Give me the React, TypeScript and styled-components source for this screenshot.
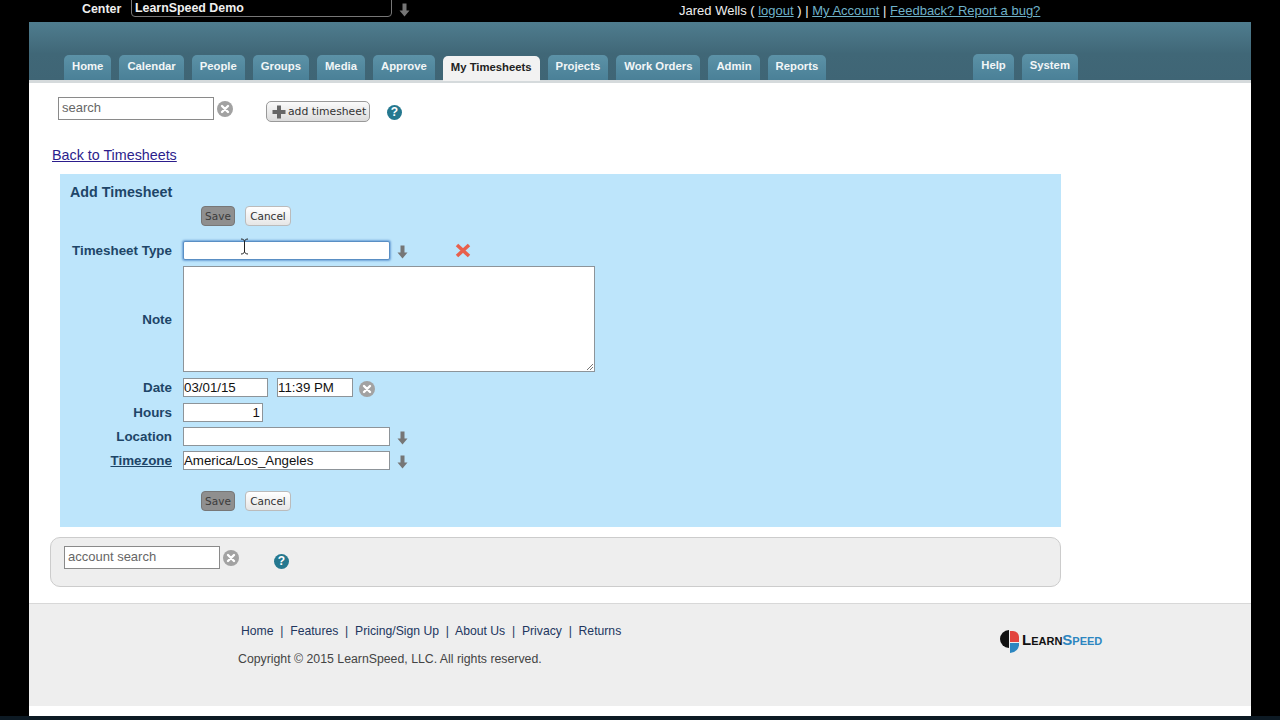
import React from 'react';
import styled, { createGlobalStyle } from 'styled-components';

const Global = createGlobalStyle`
  html, body {
    margin: 0;
    height: 720px;
    overflow: hidden;
    background: #000;
    font-family: "Liberation Sans", Arial, sans-serif;
  }
  * { box-sizing: border-box; }
`;

const TopBar = styled.div`
  height: 22px;
  overflow: hidden;
  background: #000;
  color: #eee;
  font-size: 12.4px;
  display: flex;
  align-items: flex-end;
  padding-bottom: 5px;
`;

const CenterLabel = styled.span`
  margin-left: 82px;
  width: 49px;
  font-weight: bold;
  line-height: 16px;
`;

const CenterSelect = styled.div`
  width: 261px;
  height: 24px;
  flex: none;
  border: 1px solid #777;
  border-radius: 4px;
  padding: 6px 3px 0;
  font-weight: bold;
  line-height: 16px;
  color: #f0f0f0;
`;

const UserLinks = styled.div`
  margin: 0 0 -2px 269px;
  font-size: 13px;
  line-height: 16px;
  white-space: pre;
  a { color: #6fb2c9; text-decoration: underline; }
`;

const Page = styled.div`
  margin-left: 29px;
  width: 1222px;
  height: 698px;
  background: #fff;
  display: flex;
  flex-direction: column;
`;

const Header = styled.div`
  height: 61px;
  flex: none;
  background: linear-gradient(#4f7d8f, #406777 55%, #3f6575);
  border-bottom: 3px solid #d5dadc;
  padding-left: 35px;
  display: flex;
  align-items: flex-end;
  gap: 8px;
`;

const Tab = styled.div<{ $active?: boolean; $tall?: boolean }>`
  height: ${p => (p.$tall ? 26 : 25)}px;
  padding: 5px 8px 0;
  border-radius: 5px 5px 0 0;
  font-size: 11.3px;
  font-weight: bold;
  line-height: 13px;
  color: ${p => (p.$active ? '#222' : '#f2f6f7')};
  background: ${p => (p.$active ? '#f2f2f2' : 'linear-gradient(#5c92a7, #4a8097)')};
  margin-bottom: ${p => (p.$active ? -1 : 0)}px;
`;

const TabGap = styled.div`
  width: 131px;
`;

const Content = styled.div`
  flex: 1;
  padding-top: 14px;
`;

const SearchRow = styled.div`
  display: flex;
  align-items: flex-start;
  height: 49px;
  margin-left: 29px;
`;

const SearchInput = styled.div`
  width: 156px;
  height: 23px;
  border: 1px solid #8a8a8a;
  background: #fff;
  color: #666;
  font-size: 13px;
  line-height: 20px;
  padding-left: 3px;
`;

const ClearIcon = styled.span<{ $x: number; $y: number }>`
  display: inline-flex;
  margin: ${p => p.$y}px 0 0 ${p => p.$x}px;
`;

const AddButton = styled.div`
  margin: 4px 0 0 33px;
  width: 104px;
  height: 21px;
  border: 1px solid #999;
  border-radius: 5px;
  background: linear-gradient(#fafafa, #dcdcdc);
  display: flex;
  align-items: center;
  padding-left: 5px;
  gap: 2px;
  font-family: "DejaVu Sans", sans-serif;
  font-size: 10.8px;
  color: #333;
  white-space: nowrap;
`;

const Help = styled.span<{ $x: number; $y: number }>`
  width: 15px;
  height: 15px;
  margin: ${p => p.$y}px 0 0 ${p => p.$x}px;
  border-radius: 50%;
  background: #25788f;
  color: #fff;
  font-size: 12px;
  font-weight: bold;
  line-height: 15px;
  text-align: center;
`;

const BackLink = styled.a`
  display: block;
  margin-left: 23px;
  height: 18px;
  font-size: 14.3px;
  line-height: 18px;
  color: #2c1d8c;
  text-decoration: underline;
`;

const Panel = styled.div`
  position: relative;
  margin: 10px 0 0 31px;
  width: 1001px;
  height: 353px;
  background: #bde5fb;
  padding: 10px 0 0 10px;
`;

const PanelTitle = styled.div`
  font-size: 14.3px;
  font-weight: bold;
  line-height: 16px;
  color: #1e4568;
`;

const Buttons = styled.div<{ $top: number }>`
  display: flex;
  gap: 10px;
  margin: ${p => p.$top}px 0 0 131px;
`;

const FormButton = styled.div<{ $primary?: boolean }>`
  height: 20px;
  width: ${p => (p.$primary ? 34 : 46)}px;
  text-align: center;
  border-radius: 4px;
  border: 1px solid ${p => (p.$primary ? '#777' : '#bbb')};
  background: ${p => (p.$primary ? '#8f8f8f' : 'linear-gradient(#fff, #e6e6e6)')};
  color: ${p => (p.$primary ? '#3c3c3c' : '#333')};
  font-family: "DejaVu Sans", sans-serif;
  font-size: 10.5px;
  line-height: 18px;
`;

const Row = styled.div<{ $top: number; $height: number }>`
  display: grid;
  grid-template-columns: 102px 1fr;
  column-gap: 11px;
  margin-top: ${p => p.$top}px;
  height: ${p => p.$height}px;
  align-items: center;
`;

const Label = styled.div`
  font-size: 13.4px;
  font-weight: bold;
  text-align: right;
  color: #1e4568;
  white-space: nowrap;
  a { color: inherit; text-decoration: underline; }
`;

const Fields = styled.div`
  display: flex;
  align-items: center;
  height: 100%;
`;

const Field = styled.div<{ $w: number; $focus?: boolean; $right?: boolean }>`
  width: ${p => p.$w}px;
  height: 100%;
  background: #fff;
  border: 1px solid ${p => (p.$focus ? '#5a8fc4' : '#8d9499')};
  box-shadow: ${p => (p.$focus ? '0 0 2px 1px #6ea3d8' : 'none')};
  border-radius: ${p => (p.$focus ? 2 : 0)}px;
  font-size: 13.3px;
  line-height: 17px;
  padding: 0 2px 0 0;
  color: #111;
  text-align: ${p => (p.$right ? 'right' : 'left')};
  flex: none;
`;

const Spaced = styled.span<{ $x: number; $y?: number }>`
  display: inline-flex;
  margin-left: ${p => p.$x}px;
  margin-top: ${p => p.$y ?? 0}px;
`;

const NoteBox = styled.div`
  position: relative;
  width: 412px;
  height: 106px;
  background: #fff;
  border: 1px solid #8d9499;
`;

const Grip = styled.svg`
  position: absolute;
  right: 0;
  bottom: 0;
`;

const Cursor = styled.svg`
  position: absolute;
  left: 180px;
  top: 64px;
`;

const AccountBar = styled.div`
  margin: 10px 0 0 21px;
  width: 1011px;
  height: 50px;
  background: #eee;
  border: 1px solid #ccc;
  border-radius: 10px;
  display: flex;
  align-items: flex-start;
  padding: 8px 0 0 13px;
`;

const Footer = styled.div`
  height: 103px;
  flex: none;
  background: #eee;
  border-top: 1px solid #d8d8d8;
  display: flex;
`;

const FooterText = styled.div`
  margin-left: 209px;
  padding-top: 20px;
  width: 500px;
`;

const FooterLinks = styled.div`
  margin-left: 3px;
  font-size: 12.2px;
  line-height: 15px;
  color: #22365e;
  white-space: pre;
`;

const Copyright = styled.div`
  margin-top: 13px;
  font-size: 12.3px;
  line-height: 15px;
  color: #444;
`;

const Logo = styled.div`
  margin: 25px 0 0 262px;
  display: flex;
  align-items: flex-start;
  gap: 3px;
  height: 25px;
`;

const LogoText = styled.span`
  font-size: 15px;
  font-weight: bold;
  font-variant: small-caps;
  line-height: 22px;
  color: #111;
  span { color: #2c86c0; }
`;

const BottomGap = styled.div`
  height: 10px;
  flex: none;
  background: #fff;
`;

const BottomEdge = styled.div`
  height: 4px;
  margin-left: -29px;
  width: 1280px;
  background: #0d1a24;
  flex: none;
`;

const DownArrow = () => (
  <svg width="11" height="14" viewBox="0 0 11 14">
    <path d="M3.500 0.500h4v7h3l-5 6-5-6h3z" fill="#767676" />
  </svg>
);

const Clear = () => (
  <svg width="16" height="16" viewBox="0 0 16 16">
    <circle cx="8" cy="8" r="8" fill="#a2a2a2" />
    <path d="M5 5l6 6M11 5l-6 6" stroke="#fff" strokeWidth="2.4" strokeLinecap="round" />
  </svg>
);

const RedX = () => (
  <svg width="16" height="15" viewBox="0 0 16 15">
    <path d="M2 2l12 11M14 2L2 13" stroke="#e8604c" strokeWidth="3.6" />
  </svg>
);

const Plus = () => (
  <svg width="14" height="14" viewBox="0 0 14 14">
    <path d="M5 0.500h4v4.500h4.500v4h-4.500v4.500h-4v-4.500h-4.500v-4h4.500z" fill="#666" />
  </svg>
);

const tabs = ['Home', 'Calendar', 'People', 'Groups', 'Media', 'Approve', 'My Timesheets', 'Projects', 'Work Orders', 'Admin', 'Reports'];

const FormActions = ({ top }: { top: number }) => (
  <Buttons $top={top}>
    <FormButton $primary>Save</FormButton>
    <FormButton>Cancel</FormButton>
  </Buttons>
);

export default function App() {
  return (
    <>
      <Global />
      <TopBar>
        <CenterLabel>Center</CenterLabel>
        <CenterSelect>LearnSpeed Demo</CenterSelect>
        <Spaced $x={7}><DownArrow /></Spaced>
        <UserLinks>
          Jared Wells ( <a>logout</a> ) | <a>My Account</a> | <a>Feedback? Report a bug?</a>
        </UserLinks>
      </TopBar>
      <Page>
        <Header>
          {tabs.map(t => (
            <Tab key={t} $active={t === 'My Timesheets'}>{t}</Tab>
          ))}
          <TabGap />
          <Tab $tall>Help</Tab>
          <Tab $tall>System</Tab>
        </Header>
        <Content>
          <SearchRow>
            <SearchInput>search</SearchInput>
            <ClearIcon $x={3} $y={4}><Clear /></ClearIcon>
            <AddButton><Plus />add timesheet</AddButton>
            <Help $x={17} $y={8}>?</Help>
          </SearchRow>
          <BackLink>Back to Timesheets</BackLink>
          <Panel>
            <PanelTitle>Add Timesheet</PanelTitle>
            <FormActions top={6} />
            <Row $top={15} $height={19}>
              <Label>Timesheet Type</Label>
              <Fields>
                <Field $w={207} $focus />
                <Spaced $x={7} $y={3}><DownArrow /></Spaced>
                <Spaced $x={47}><RedX /></Spaced>
              </Fields>
            </Row>
            <Row $top={6} $height={106}>
              <Label>Note</Label>
              <NoteBox>
                <Grip width="8" height="8" viewBox="0 0 8 8">
                  <path d="M1 7l6-6M4 7l3-3" stroke="#777" strokeWidth="1" />
                </Grip>
              </NoteBox>
            </Row>
            <Row $top={6} $height={18}>
              <Label>Date</Label>
              <Fields>
                <Field $w={85}>03/01/15</Field>
                <Spaced $x={9} />
                <Field $w={76}>11:39 PM</Field>
                <Spaced $x={6} $y={2}><Clear /></Spaced>
              </Fields>
            </Row>
            <Row $top={7} $height={18}>
              <Label>Hours</Label>
              <Fields>
                <Field $w={80} $right>1</Field>
              </Fields>
            </Row>
            <Row $top={6} $height={19}>
              <Label>Location</Label>
              <Fields>
                <Field $w={207} />
                <Spaced $x={7} $y={3}><DownArrow /></Spaced>
              </Fields>
            </Row>
            <Row $top={5} $height={19}>
              <Label><a>Timezone</a></Label>
              <Fields>
                <Field $w={207}>America/Los_Angeles</Field>
                <Spaced $x={7} $y={3}><DownArrow /></Spaced>
              </Fields>
            </Row>
            <FormActions top={21} />
            <Cursor width="9" height="17" viewBox="0 0 9 17">
              <path d="M1 1c2 0 3 1 3.500 2v11c-.5 1-1.500 2-3.500 2M8 1c-2 0-3 1-3.500 2M8 16c-2 0-3-1-3.500-2" fill="none" stroke="#222" strokeWidth="1" />
            </Cursor>
          </Panel>
          <AccountBar>
            <SearchInput>account search</SearchInput>
            <ClearIcon $x={3} $y={4}><Clear /></ClearIcon>
            <Help $x={35} $y={8}>?</Help>
          </AccountBar>
        </Content>
        <Footer>
          <FooterText>
            <FooterLinks>{'Home  |  Features  |  Pricing/Sign Up  |  About Us  |  Privacy  |  Returns'}</FooterLinks>
            <Copyright>Copyright © 2015 LearnSpeed, LLC. All rights reserved.</Copyright>
          </FooterText>
          <Logo>
            <svg width="19" height="25" viewBox="0 0 19 25">
              <path d="M9 1a9 9 0 0 0 0 18z" fill="#111" />
              <path d="M10 2h3a6 6 0 0 1 6 6v5h-9z" fill="#e2443e" />
              <path d="M10 14h9a9 9 0 0 1-9 10z" fill="#2c86c0" />
            </svg>
            <LogoText>Learn<span>Speed</span></LogoText>
          </Logo>
        </Footer>
        <BottomGap />
        <BottomEdge />
      </Page>
    </>
  );
}
